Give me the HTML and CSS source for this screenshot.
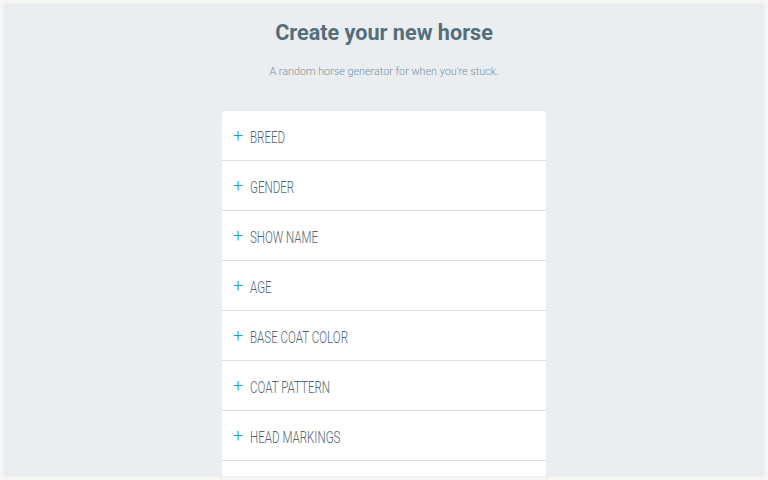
FILE: index.html
```html
<!DOCTYPE html>
<html>
<head>
<meta charset="utf-8">
<link rel="stylesheet" href="styles.css">
</head>
<body>
<div class="panel">
  <h1 class="title">Create your new horse</h1>
  <p class="subtitle">A random horse generator for when you're stuck.</p>
  <div class="card">
    <div class="row"><span class="plus">+</span><span class="label">BREED</span></div>
    <div class="row"><span class="plus">+</span><span class="label">GENDER</span></div>
    <div class="row"><span class="plus">+</span><span class="label">SHOW NAME</span></div>
    <div class="row"><span class="plus">+</span><span class="label">AGE</span></div>
    <div class="row"><span class="plus">+</span><span class="label">BASE COAT COLOR</span></div>
    <div class="row"><span class="plus">+</span><span class="label">COAT PATTERN</span></div>
    <div class="row"><span class="plus">+</span><span class="label">HEAD MARKINGS</span></div>
    <div class="row"></div>
  </div>
</div>
</body>
</html>
```
FILE: styles.css
```css
html, body {
  margin: 0;
  padding: 0;
  height: 100%;
}
body {
  background: #f6f6f5;
  padding: 4px;
  box-sizing: border-box;
  font-family: Roboto, "Liberation Sans", sans-serif;
}
.panel {
  height: 472px;
  background: #ebeef1;
  overflow: hidden;
  display: flex;
  flex-direction: column;
  align-items: center;
  box-shadow: 0 0 1px rgba(0,0,0,0.15);
}
.title {
  margin: 16px 0 0;
  font-size: 21.6px;
  line-height: 26px;
  font-weight: 700;
  color: #546e7a;
}
.subtitle {
  margin: 19px 0 0;
  font-size: 10.8px;
  line-height: 14px;
  font-weight: 300;
  color: #78909c;
}
.card {
  margin-top: 32px;
  width: 324px;
  background: #fff;
  border-radius: 4px 4px 0 0;
  flex-shrink: 0;
}
.row {
  height: 49px;
  border-bottom: 1px solid #dadfe2;
  display: flex;
  align-items: center;
  padding-left: 11px;
  padding-top: 2px;
  box-sizing: content-box;
}
.row:not(:last-child) {
  height: 47px;
}
.row:last-child {
  height: 60px;
  border-bottom: none;
}
.plus {
  color: #1ea0b5;
  font-size: 18px;
  font-weight: 300;
  width: 17px;
  line-height: 1;
  margin-top: -1px;
}
.label {
  display: inline-block;
  font-size: 17px;
  font-weight: 300;
  color: #4f6571;
  transform: scaleX(0.68);
  transform-origin: left center;
}
```
